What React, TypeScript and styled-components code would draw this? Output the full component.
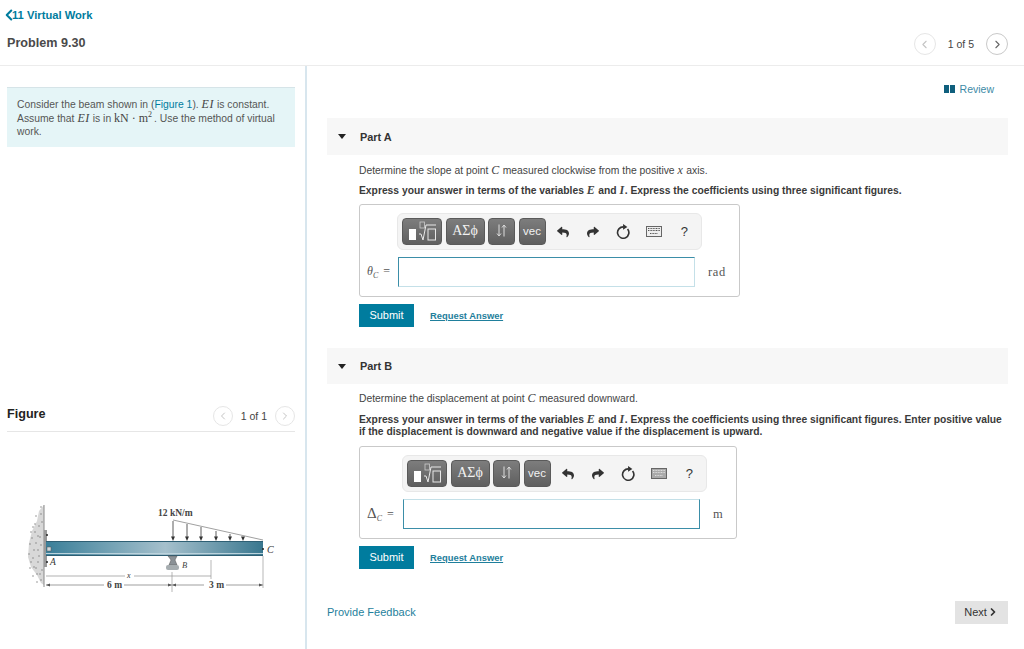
import styled, { createGlobalStyle } from "styled-components";
import { ChevronLeft, ChevronRight } from "lucide-react";
import { FaReply, FaShare } from "react-icons/fa";

const GlobalStyle = createGlobalStyle`
  html, body {
    margin: 0;
    padding: 0;
    background: #fff;
    font-family: "Liberation Sans", Arial, sans-serif;
    color: #333;
  }
  * { box-sizing: border-box; }
`;

const Page = styled.div`
  width: 1024px;
  height: 649px;
  overflow: hidden;
`;

const Header = styled.header`
  height: 66px;
  padding: 8px 16px 0 0;
  border-bottom: 1px solid #ececec;
  display: flex;
  justify-content: space-between;
  align-items: flex-start;
`;

const Crumb = styled.a`
  display: flex;
  align-items: center;
  height: 14px;
  font-size: 11.2px;
  font-weight: 700;
  color: #007c9e;
  svg { margin-right: -6px; flex: none; }
`;

const Title = styled.h1`
  margin: 13px 0 0 7px;
  font-size: 12.6px;
  line-height: 16px;
  font-weight: 700;
  color: #4a4a4a;
`;

const Pager = styled.div<{ $small?: boolean }>`
  display: flex;
  align-items: center;
  gap: ${(p) => (p.$small ? "8px" : "12px")};
  font-size: 10.5px;
  color: #444;
  margin-top: ${(p) => (p.$small ? "5px" : "25px")};
`;

const Round = styled.span<{ $off?: boolean; $size: number }>`
  width: ${(p) => p.$size}px;
  height: ${(p) => p.$size}px;
  border-radius: 50%;
  border: 1px solid ${(p) => (p.$off ? "#e6e6e6" : "#c9c9c9")};
  color: ${(p) => (p.$off ? "#c4c4c4" : "#666")};
  display: flex;
  align-items: center;
  justify-content: center;
`;

const Body = styled.div`
  display: flex;
  height: 583px;
`;

const Side = styled.aside`
  width: 307px;
  flex: none;
  border-right: 2px solid #d8e6ee;
  padding: 21px 10px 0 7px;
`;

const Intro = styled.div`
  height: 60px;
  background: #e5f5f7;
  border-top: 1px solid #d6e4e8;
  padding: 10px;
  font-size: 10.35px;
  line-height: 13.5px;
  color: #555;
`;

const Link = styled.a`
  color: #007c9e;
`;

const M = styled.i`
  font-family: "Liberation Serif", "Times New Roman", serif;
  font-size: 12px;
  line-height: 0;
  color: #444;
  letter-spacing: 0.6px;
`;

const R = styled.span`
  font-family: "Liberation Serif", "Times New Roman", serif;
  font-size: 12px;
  line-height: 0;
  color: #444;
  padding-right: 2px;
  sup { font-size: 8px; line-height: 0; }
`;

const FigureHead = styled.div`
  margin-top: 252px;
  height: 33px;
  padding-bottom: 3px;
  border-bottom: 1px solid #e6e6e6;
  display: flex;
  align-items: center;
  justify-content: space-between;
`;

const FigureTitle = styled.h2`
  margin: 0;
  font-size: 12.6px;
  font-weight: 700;
  color: #222;
`;

const FigureArt = styled.svg`
  display: block;
  margin: 60px 0 0 -7px;
`;

const Main = styled.main`
  flex: 1;
  padding: 15px 16px 0 20px;
`;

const ReviewRow = styled.div`
  display: flex;
  justify-content: flex-end;
  align-items: center;
  gap: 5px;
  height: 15px;
  padding-right: 14px;
  font-size: 10.5px;
  color: #3d8aa6;
`;

const PartBar = styled.div<{ $top: number; $height: number }>`
  margin-top: ${(p) => p.$top}px;
  height: ${(p) => p.$height}px;
  background: #f7f7f7;
  display: flex;
  align-items: center;
  padding-left: 11px;
  font-size: 10.9px;
  font-weight: 700;
  color: #333;
`;

const Caret = styled.span`
  width: 0;
  height: 0;
  border-left: 4.5px solid transparent;
  border-right: 4.5px solid transparent;
  border-top: 5px solid #222;
  margin-right: 14px;
`;

const PartBody = styled.div`
  padding-left: 32px;
`;

const Prompt = styled.p<{ $top: number }>`
  margin: ${(p) => p.$top}px 0 0;
  font-size: 10.35px;
  line-height: 12px;
  color: #444;
`;

const Instruction = styled.p<{ $top: number }>`
  margin: ${(p) => p.$top}px 0 0;
  font-size: 10.3px;
  line-height: 12px;
  font-weight: 700;
  color: #3a3a3a;
`;

const AnswerBox = styled.div<{ $width: number; $top: number }>`
  width: ${(p) => p.$width}px;
  height: 93px;
  margin-top: ${(p) => p.$top}px;
  border: 1px solid #c9c9c9;
  border-radius: 3px;
  padding: 8px 0 0 7px;
`;

const Toolbar = styled.div<{ $indent: number }>`
  width: 305px;
  height: 37px;
  margin-left: ${(p) => p.$indent}px;
  background: #f4f4f4;
  border: 1px solid #e8e8e8;
  border-radius: 6px;
  display: flex;
  align-items: center;
  padding-left: 4px;
  gap: 3.5px;
`;

const ToolButton = styled.span<{ $width: number; $serif?: boolean }>`
  width: ${(p) => p.$width}px;
  height: 27px;
  border-radius: 4px;
  background: linear-gradient(#7d7d7d, #5f5f5f);
  border: 1px solid #5a5a5a;
  color: #f2f2f2;
  display: flex;
  align-items: center;
  justify-content: center;
  font-family: ${(p) => (p.$serif ? '"Liberation Serif", serif' : '"Liberation Sans", sans-serif')};
  font-size: ${(p) => (p.$serif ? "14px" : "11.5px")};
  padding-bottom: 2px;
`;

const ToolIcons = styled.div`
  display: flex;
  margin-left: -1px;
`;

const ToolIcon = styled.span`
  width: 30.3px;
  height: 20px;
  display: flex;
  align-items: center;
  justify-content: center;
  color: #333;
  font-size: 13px;
`;

const InputRow = styled.div`
  display: flex;
  align-items: center;
  margin-top: 7px;
`;

const VarLabel = styled.span<{ $width: number }>`
  width: ${(p) => p.$width}px;
  flex: none;
  font-family: "Liberation Serif", serif;
  font-size: 12px;
  color: #555;
  white-space: nowrap;
  b { font-weight: 400; font-size: 15px; }
  sub { font-size: 8px; margin-right: 5px; }
`;

const AnswerInput = styled.div<{ $flip?: boolean }>`
  width: 297px;
  height: 30px;
  background: #fff;
  border: 1px solid #c4e0e8;
  ${(p) =>
    p.$flip
      ? "border-bottom-color: #3b8ea8; border-right-color: #3b8ea8; border-left-color: #3b8ea8;"
      : "border-top-color: #3b8ea8; border-left-color: #3b8ea8;"}
`;

const Unit = styled.span`
  margin-left: 13px;
  font-family: "Liberation Serif", serif;
  font-size: 12.5px;
  letter-spacing: 0.6px;
  color: #555;
`;

const Actions = styled.div`
  display: flex;
  align-items: center;
  margin-top: 7px;
  gap: 16px;
`;

const Submit = styled.button`
  width: 55px;
  height: 23px;
  border: 0;
  padding: 0 0 2px;
  background: #007c9e;
  color: #fff;
  font-family: inherit;
  font-size: 11px;
`;

const RequestLink = styled.a`
  margin-bottom: 1px;
  font-size: 9.4px;
  font-weight: 700;
  color: #1f7f9c;
  text-decoration: underline;
`;

const Footer = styled.div`
  display: flex;
  align-items: center;
  justify-content: space-between;
  margin-top: 32px;
  height: 23px;
`;

const Feedback = styled.a`
  margin-bottom: 1px;
  font-size: 11px;
  color: #1f7f9c;
`;

const NextButton = styled.button`
  width: 53px;
  height: 23px;
  border: 0;
  padding: 0 0 1px;
  background: #e3e3e3;
  color: #333;
  font-family: inherit;
  font-size: 11px;
  display: flex;
  align-items: center;
  justify-content: center;
`;

const Template = () => (
  <svg width="31" height="20" viewBox="0 0 31 20" fill="none">
    <rect x="2" y="8" width="7" height="11" fill="#fff" />
    <rect x="13" y="1" width="4.5" height="6" stroke="#ccc" strokeWidth="0.8" />
    <path d="M12 13l2 0 2 6 3-15h10" stroke="#e8e8e8" strokeWidth="1" />
    <rect x="21" y="8" width="7.5" height="11" stroke="#e8e8e8" strokeWidth="1" />
  </svg>
);

const Sort = () => (
  <svg width="11" height="13" viewBox="0 0 11 13" fill="none" stroke="#ddd" strokeWidth="1">
    <path d="M3 0.5v11M1 9.5l2 2.5 2-2.5" />
    <path d="M8 12.5v-11M6 3.5l2-2.5 2 2.5" />
  </svg>
);

const Reload = () => (
  <svg width="15" height="15" viewBox="0 0 14 14" fill="none">
    <path d="M10.8 4.6A5.3 5.3 0 1 1 7 2.7" stroke="#333" strokeWidth="1.5" />
    <path d="M6.6 0l4 2.7-4 2.7z" fill="#333" />
  </svg>
);

const Keyboard = ({ muted }: { muted?: boolean }) => (
  <svg width="16" height="11" viewBox="0 0 16 11">
    <rect x="0.5" y="0.5" width="15" height="10" fill={muted ? "#aaa" : "#eee"} stroke="#666" />
    <path
      d="M2 2.5h12M2 4.5h12M4 7.5h8"
      stroke={muted ? "#ddd" : "#555"}
      strokeWidth="1"
      strokeDasharray="1 0.6"
    />
  </svg>
);

const Book = () => (
  <svg width="11" height="8" viewBox="0 0 11 8">
    <rect x="0" y="0" width="5" height="8" fill="#0f5f7d" />
    <rect x="6" y="0" width="5" height="8" fill="#0f5f7d" />
  </svg>
);

const rocks = [
  [31, 530], [35, 530], [30, 542], [38, 548], [33, 556], [30, 566], [37, 572], [41, 512],
  [36, 514], [40, 535], [34, 565], [41, 578], [29, 552], [38, 560], [33, 574], [39, 524],
  [32, 536], [36, 541], [42, 568], [35, 522], [37, 580], [41, 505], [41, 543], [34, 548],
  [39, 554], [31, 560], [36, 566], [42, 520], [38, 534], [33, 525], [40, 572],
];

const arrows: [number, number][] = [
  [173, 519], [187, 522], [201, 525], [216, 529], [230, 532], [243, 535],
];

const Beam = () => (
  <FigureArt width="300" height="110" viewBox="0 490 300 110">
    <defs>
      <linearGradient id="beamFill" x1="0" x2="1" y1="0" y2="0">
        <stop offset="0" stopColor="#3a7f99" />
        <stop offset="0.55" stopColor="#a5c0cc" />
        <stop offset="1" stopColor="#39778f" />
      </linearGradient>
    </defs>
    <path d="M44 503l-5 6-2 10-5 10-3 12-1 14 3 10 6 8 4 8 3 2z" fill="#d8d8d8" />
    {rocks.map(([x, y]) => (
      <circle key={`${x}-${y}`} cx={x} cy={y} r="0.7" fill="#777" />
    ))}
    <path d="M44 503v82" stroke="#888" strokeWidth="1" />
    <rect x="44" y="528" width="3" height="37" fill="#999" />
    <circle cx="47" cy="533" r="1" fill="#222" />
    <circle cx="47" cy="560" r="1" fill="#222" />
    <rect x="46" y="539" width="217" height="15" fill="url(#beamFill)" />
    <path d="M46 539.5h217M46 553.5h217" stroke="#2e5f74" strokeWidth="1" />
    <path d="M46 551.5h217" stroke="#bcd3dc" strokeWidth="1" />
    <rect x="47" y="545" width="4" height="4" fill="#cfd8dc" stroke="#555" strokeWidth="0.5" />
    <text x="158" y="514" fontFamily="Liberation Serif" fontSize="9.5" fontWeight="700" fill="#444">
      12 kN/m
    </text>
    <path d="M173 518L263 538" stroke="#777" strokeWidth="0.7" />
    {arrows.map(([x, y]) => (
      <g key={x}>
        <path d={`M${x} ${y}V536`} stroke="#333" strokeWidth="0.8" />
        <path d={`M${x - 2} 534.5h4l-2 4.5z`} fill="#333" />
      </g>
    ))}
    <path d="M168 554h9l-2 4 2 5h-8l2-5z" fill="#8a9196" stroke="#555" strokeWidth="0.5" />
    <rect x="166" y="563" width="13" height="5" rx="2" fill="#a6adb0" />
    <circle cx="263" cy="547" r="1" fill="#222" />
    <text x="50" y="563" fontFamily="Liberation Serif" fontStyle="italic" fontSize="9.5" fill="#333">A</text>
    <text x="182" y="566" fontFamily="Liberation Serif" fontStyle="italic" fontSize="8.5" fill="#444">B</text>
    <text x="267" y="551" fontFamily="Liberation Serif" fontStyle="italic" fontSize="10" fill="#333">C</text>
    <text x="127" y="576" fontFamily="Liberation Serif" fontStyle="italic" fontSize="8" fill="#333">x</text>
    <path d="M46 574h79M134 574h77" stroke="#ccc" strokeWidth="1.4" fill="none" />
    <path d="M211 558v19" stroke="#999" strokeWidth="0.7" fill="none" />
    <path d="M46 583h58M124 583h48M172 583h32M226 583h37" stroke="#777" strokeWidth="0.7" fill="none" />
    <path d="M46 583l4-1.5v3zM172 583l-4-1.5v3zM172 583l4-1.5v3zM263 583l-4-1.5v3z" fill="#555" />
    <path d="M172 570v20M263 554v32" stroke="#999" strokeWidth="0.7" fill="none" />
    <text x="107" y="586" fontFamily="Liberation Serif" fontWeight="700" fontSize="9.5" fill="#444">6 m</text>
    <text x="209" y="586" fontFamily="Liberation Serif" fontWeight="700" fontSize="9.5" fill="#444">3 m</text>
  </FigureArt>
);

type ToolsProps = { muted?: boolean; indent: number };

const Tools = ({ muted, indent }: ToolsProps) => (
  <Toolbar $indent={indent}>
    <ToolButton $width={40}><Template /></ToolButton>
    <ToolButton $width={39} $serif>ΑΣϕ</ToolButton>
    <ToolButton $width={27}><Sort /></ToolButton>
    <ToolButton $width={27}>vec</ToolButton>
    <ToolIcons>
      <ToolIcon><FaReply size={12} /></ToolIcon>
      <ToolIcon><FaShare size={12} /></ToolIcon>
      <ToolIcon><Reload /></ToolIcon>
      <ToolIcon><Keyboard muted={muted} /></ToolIcon>
      <ToolIcon>?</ToolIcon>
    </ToolIcons>
  </Toolbar>
);

export default function App() {
  return (
    <Page>
      <GlobalStyle />
      <Header>
        <div>
          <Crumb><ChevronLeft size={18} strokeWidth={2.8} />11 Virtual Work</Crumb>
          <Title>Problem 9.30</Title>
        </div>
        <Pager>
          <Round $off $size={22}><ChevronLeft size={13} /></Round>
          1 of 5
          <Round $size={22}><ChevronRight size={13} /></Round>
        </Pager>
      </Header>
      <Body>
        <Side>
          <Intro>
            Consider the beam shown in (<Link>Figure 1</Link>). <M>EI</M> is constant.
            <br />
            Assume that <M>EI</M> is in <R>kN · m<sup>2</sup></R>. Use the method of virtual
            <br />
            work.
          </Intro>
          <FigureHead>
            <FigureTitle>Figure</FigureTitle>
            <Pager $small>
              <Round $off $size={20}><ChevronLeft size={12} /></Round>
              1 of 1
              <Round $off $size={20}><ChevronRight size={12} /></Round>
            </Pager>
          </FigureHead>
          <Beam />
        </Side>
        <Main>
          <ReviewRow><Book />Review</ReviewRow>
          <PartBar $top={22} $height={37}><Caret />Part A</PartBar>
          <PartBody>
            <Prompt $top={10}>
              Determine the slope at point <M>C</M> measured clockwise from the positive <M>x</M> axis.
            </Prompt>
            <Instruction $top={8}>
              Express your answer in terms of the variables <M>E</M> and <M>I</M>. Express the coefficients using three significant figures.
            </Instruction>
            <AnswerBox $width={381} $top={7}>
              <Tools indent={30} />
              <InputRow>
                <VarLabel $width={31}><i>θ<sub>C</sub></i>=</VarLabel>
                <AnswerInput />
                <Unit>rad</Unit>
              </InputRow>
            </AnswerBox>
            <Actions>
              <Submit>Submit</Submit>
              <RequestLink>Request Answer</RequestLink>
            </Actions>
          </PartBody>
          <PartBar $top={21} $height={36}><Caret />Part B</PartBar>
          <PartBody>
            <Prompt $top={9}>
              Determine the displacement at point <M>C</M> measured downward.
            </Prompt>
            <Instruction $top={9}>
              Express your answer in terms of the variables <M>E</M> and <M>I</M>. Express the coefficients using three significant figures. Enter positive value if the displacement is downward and negative value if the displacement is upward.
            </Instruction>
            <AnswerBox $width={378} $top={8}>
              <Tools muted indent={35} />
              <InputRow>
                <VarLabel $width={36}><b>Δ</b><sub><i>C</i></sub>=</VarLabel>
                <AnswerInput $flip />
                <Unit>m</Unit>
              </InputRow>
            </AnswerBox>
            <Actions>
              <Submit>Submit</Submit>
              <RequestLink>Request Answer</RequestLink>
            </Actions>
          </PartBody>
          <Footer>
            <Feedback>Provide Feedback</Feedback>
            <NextButton>Next<ChevronRight size={12} strokeWidth={3.5} /></NextButton>
          </Footer>
        </Main>
      </Body>
    </Page>
  );
}
